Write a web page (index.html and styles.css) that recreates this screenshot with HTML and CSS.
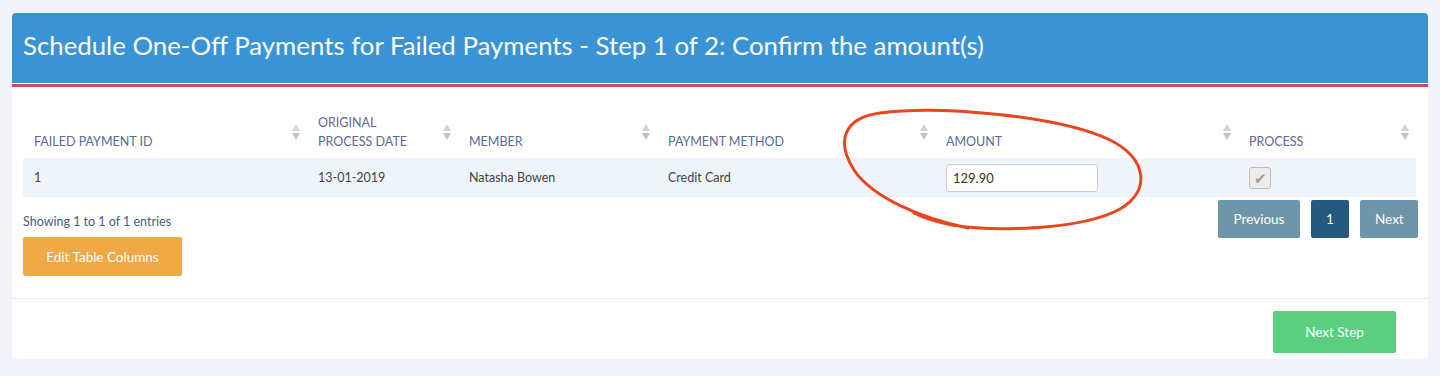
FILE: index.html
```html
<!DOCTYPE html>
<html lang="en">
  <head>
    <meta charset="UTF-8" />
    <meta name="viewport" content="width=device-width, initial-scale=1.0" />
    <title>Schedule One-Off Payments</title>
    <link rel="stylesheet" href="styles.css">
  </head>
  <body>
    <div class="card">
      <header class="card-header">
        <h1>Schedule One-Off Payments for Failed Payments - Step 1 of 2: Confirm the amount(s)</h1>
      </header>
      <div class="card-body">
        <table class="data-table">
          <colgroup>
            <col style="width: 284px" />
            <col style="width: 151px" />
            <col style="width: 199px" />
            <col style="width: 278px" />
            <col style="width: 303px" />
            <col />
          </colgroup>
          <thead>
            <tr>
              <th>Failed Payment ID<span class="sort"></span></th>
              <th>Original<br />Process Date<span class="sort"></span></th>
              <th>Member<span class="sort"></span></th>
              <th>Payment Method<span class="sort"></span></th>
              <th>Amount<span class="sort"></span></th>
              <th>Process<span class="sort"></span></th>
            </tr>
          </thead>
          <tbody>
            <tr>
              <td>1</td>
              <td>13-01-2019</td>
              <td>Natasha Bowen</td>
              <td>Credit Card</td>
              <td><input type="text" class="amount-input" value="129.90" /></td>
              <td><span class="check-box">&#10004;</span></td>
            </tr>
          </tbody>
        </table>
        <div class="table-footer">
          <div class="table-info">
            <div class="entries">Showing 1 to 1 of 1 entries</div>
            <button class="btn btn-orange">Edit Table Columns</button>
          </div>
          <div class="pagination">
            <button class="btn btn-page">Previous</button>
            <button class="btn btn-page active">1</button>
            <button class="btn btn-page">Next</button>
          </div>
        </div>
      </div>
      <div class="card-footer">
        <button class="btn btn-green">Next Step</button>
      </div>
    </div>

    <svg class="scribble" width="1440" height="376" viewBox="0 0 1440 376">
      <path d="M 968 228 C 920 218, 872 197, 854 170 C 836 142, 843 118, 880 113 C 940 105, 1060 116, 1110 140 C 1146 158, 1152 190, 1120 209 C 1082 230, 995 232, 952 225 C 936 222, 922 217, 914 213" />
    </svg>
  </body>
</html>
```

FILE: styles.css
```css
body {
  margin: 0;
  padding: 13px 12px 18px 12px;
  background-color: #f2f3f8;
  font-family: Lato, "Open Sans", sans-serif;
  color: #4a4a4a;
}
.card {
  background-color: #fff;
  border-radius: 4px;
  overflow: hidden;
}
.card-header {
  background-color: #3a93d5;
  height: 71px;
  border-bottom: 1px solid #fff;
  box-shadow: 0 3px 0 #d7436b;
  margin-bottom: 3px;
  padding: 0 11px;
  box-sizing: border-box;
}
.card-header h1 {
  margin: 0;
  padding-top: 15px;
  color: #fff;
  font-size: 25.8px;
  font-weight: 400;
  line-height: 34px;
}
.card-body {
  padding: 18px 12px 22px 11px;
  border-bottom: 1px solid #e9eaee;
}
.data-table {
  width: 100%;
  border-collapse: collapse;
  table-layout: fixed;
}
.data-table th {
  position: relative;
  text-align: left;
  vertical-align: bottom;
  text-transform: uppercase;
  font-weight: 400;
  font-size: 12.5px;
  line-height: 19px;
  color: #5b6a97;
  padding: 8px 20px 7px 11px;
}
.sort {
  position: absolute;
  right: 6px;
  top: 50%;
  margin-top: -8px;
  width: 9px;
  height: 16px;
}
.sort::before,
.sort::after {
  content: "";
  position: absolute;
  left: 0;
  border-left: 4.5px solid transparent;
  border-right: 4.5px solid transparent;
}
.sort::before {
  top: 0;
  border-bottom: 7px solid #d3d3d3;
}
.sort::after {
  bottom: 0;
  border-top: 7px solid #c4c4c4;
}
.data-table tbody tr {
  background-color: #eff3fa;
}
.data-table td {
  font-size: 12.5px;
  height: 29px;
  padding: 5px 11px 5px;
  vertical-align: middle;
  color: #444;
}
.amount-input {
  display: block;
  width: 152px;
  height: 28px;
  box-sizing: border-box;
  border: 1px solid #cfcfcf;
  border-radius: 3px;
  padding: 0 6px;
  font-family: inherit;
  font-size: 13px;
  color: #333;
  background: #fff;
  box-shadow: inset 0 1px 1px rgba(0, 0, 0, 0.05);
}
.check-box {
  display: flex;
  align-items: center;
  justify-content: center;
  width: 22px;
  height: 22px;
  box-sizing: border-box;
  border: 1px solid #bdbdbd;
  border-radius: 3px;
  background-color: #ececec;
  color: #9d9d9d;
  font-size: 15px;
  margin-top: 1px;
}
.table-footer {
  display: flex;
  justify-content: space-between;
  align-items: flex-start;
  padding-top: 3px;
}
.entries {
  margin-top: 13px;
  font-size: 12.5px;
  line-height: 18px;
  color: #4c5a88;
  margin-bottom: 6px;
}
.btn {
  border: none;
  border-radius: 2px;
  color: #fff;
  font-family: inherit;
  font-size: 13.5px;
  cursor: pointer;
}
.btn-orange {
  background-color: #f0a945;
  width: 159px;
  height: 39px;
}
.pagination {
  display: flex;
  gap: 11px;
  margin-right: -2px;
}
.btn-page {
  background-color: #6f95ab;
  height: 38px;
  padding: 0 15px;
}
.btn-page:first-child {
  width: 82px;
}
.btn-page:last-child {
  width: 58px;
}
.btn-page.active {
  background-color: #245a7e;
  width: 38px;
  padding: 0;
}
.card-footer {
  display: flex;
  justify-content: flex-end;
  padding: 12px 32px 6px;
}
.btn-green {
  background-color: #5bcf80;
  width: 123px;
  height: 42px;
}
.scribble {
  position: absolute;
  left: 0;
  top: 0;
  pointer-events: none;
}
.scribble path {
  fill: none;
  stroke: #e9461f;
  stroke-width: 3;
  stroke-linecap: round;
}
```
